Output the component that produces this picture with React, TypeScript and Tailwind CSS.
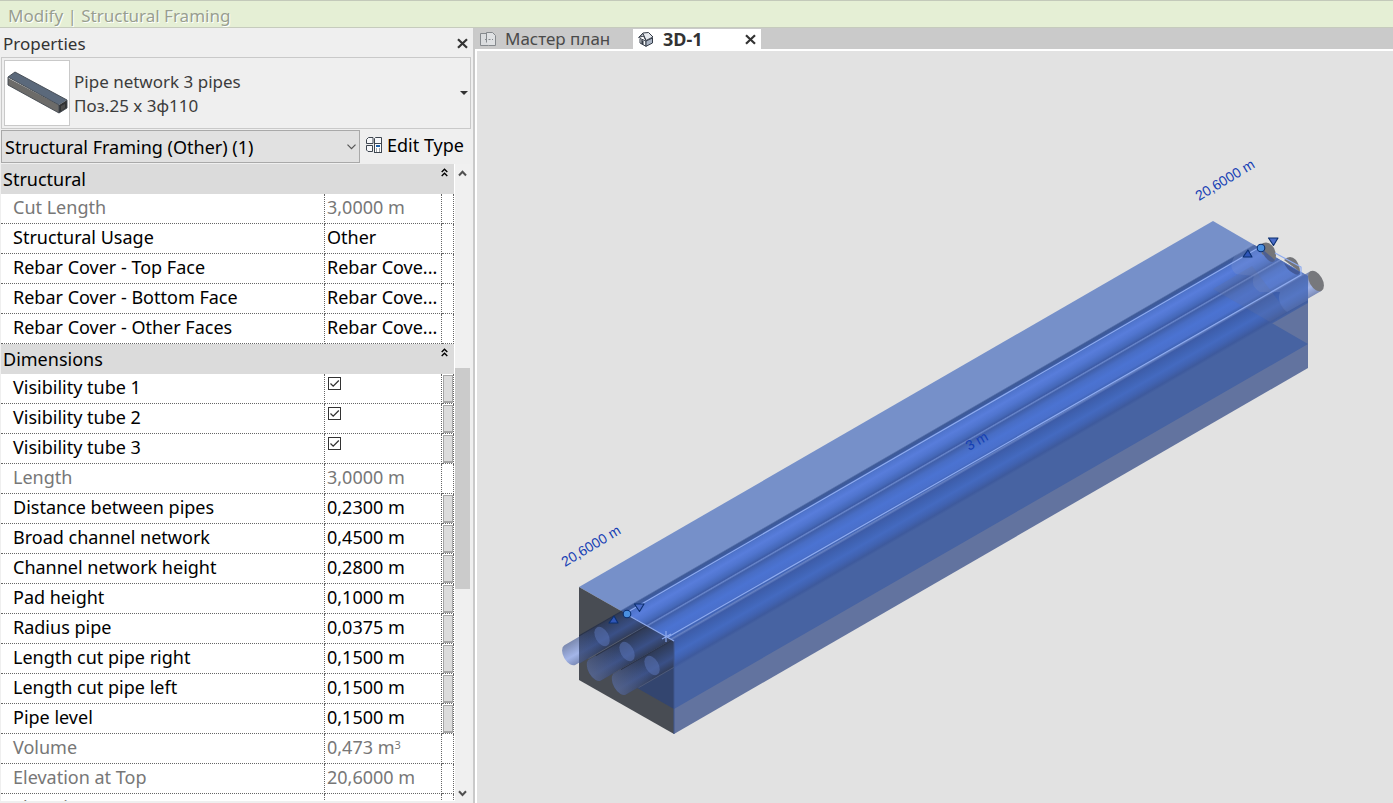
import React, { useState } from "react";

type Row = {
  name: string;
  value?: string;
  sup?: string;
  checked?: boolean;
  readOnly?: boolean;
  assoc?: boolean;
};

type Section = { title: string; rows: Row[] };

const sections: Section[] = [
  {
    title: "Structural",
    rows: [
      { name: "Cut Length", value: "3,0000 m", readOnly: true },
      { name: "Structural Usage", value: "Other" },
      { name: "Rebar Cover - Top Face", value: "Rebar Cove..." },
      { name: "Rebar Cover - Bottom Face", value: "Rebar Cove..." },
      { name: "Rebar Cover - Other Faces", value: "Rebar Cove..." },
    ],
  },
  {
    title: "Dimensions",
    rows: [
      { name: "Visibility tube 1", checked: true, assoc: true },
      { name: "Visibility tube 2", checked: true, assoc: true },
      { name: "Visibility tube 3", checked: true, assoc: true },
      { name: "Length", value: "3,0000 m", readOnly: true },
      { name: "Distance between pipes", value: "0,2300 m", assoc: true },
      { name: "Broad channel network", value: "0,4500 m", assoc: true },
      { name: "Channel network height", value: "0,2800 m", assoc: true },
      { name: "Pad height", value: "0,1000 m", assoc: true },
      { name: "Radius pipe", value: "0,0375 m", assoc: true },
      { name: "Length cut pipe right", value: "0,1500 m", assoc: true },
      { name: "Length cut pipe left", value: "0,1500 m", assoc: true },
      { name: "Pipe level", value: "0,1500 m", assoc: true },
      { name: "Volume", value: "0,473 m", sup: "3", readOnly: true },
      { name: "Elevation at Top", value: "20,6000 m", readOnly: true },
      { name: "Elevation at Bottom", readOnly: true },
    ],
  },
];

function CloseIcon() {
  return (
    <svg viewBox="0 0 11 11" className="size-[11px]" fill="none" stroke="#333" strokeWidth="2.2">
      <path d="M1 1.2 10 9.8M10 1.2 1 9.8" />
    </svg>
  );
}

function BeamThumb() {
  return (
    <svg viewBox="0 0 64 64" className="size-16">
      <path d="M3 17 54 44v8L3 24z" fill="#6c6b69" />
      <path d="M3 16 10 11 62 39 54 44z" fill="#5b697b" />
      <path d="M54 44 62 39v8l-8 5z" fill="#303234" />
      <path d="M56 45l4-2v4l-4 3z" fill="#4b4b4b" />
      <path d="M3 16v8l51 28v-8zM3 16l7-5 52 28v8l-8 5" fill="none" stroke="#3f464e" strokeWidth=".9" />
    </svg>
  );
}

function EditTypeIcon() {
  return (
    <svg viewBox="0 0 17 16" className="h-4 w-[17px]" fill="none" stroke="#3e4650" strokeWidth="1">
      <path d="M2.5.5H7v6H.5v-4zM9.5.5H15.5V6.5H8.5v-5zM.5 8.5h6v6H2L.5 13z" fill="#f7f8fa" />
      <rect x="8.5" y="6.5" width="7" height="9" fill="#fff" />
      <path d="M10 9h4" stroke="#1d5fa8" strokeWidth="2" />
      <path d="M10 12h1M13 12h1M10 14h1M13 14h1" />
    </svg>
  );
}

function PlanIcon() {
  return (
    <svg viewBox="0 0 16 15" className="h-[15px] w-4 shrink-0" fill="none" stroke="#85898d">
      <path d="M.5 1.5h8v12h-8z" fill="#dadcde" />
      <path d="M6.5 9.500V.5h6l3 3v10h-7" fill="#dfe1e3" />
      <path d="M6.5 5v6M5 7.500h8" strokeDasharray="2 1.5" />
    </svg>
  );
}

function HouseIcon() {
  return (
    <svg viewBox="0 0 16 15" className="h-[15px] w-4 shrink-0" stroke="#353c48" strokeLinejoin="round">
      <path d="M2 6.5 8 9v5.3L2 11z" fill="#f4f5f7" />
      <path d="M8 9l6.5-3v5L8 14.3z" fill="#aab4c4" />
      <path d="M.7 5.5 5 1l5.500-.5L15 5 8 8.500 5.500 4z" fill="#e6e9ee" />
      <path d="M.7 5.500 5 1.500 8 8.500" fill="none" />
      <path d="M3.500 8v3.800l1.800.9V8.800z" fill="#353c48" strokeWidth=".4" />
    </svg>
  );
}

function DoubleUp() {
  return (
    <svg viewBox="0 0 7 9" className="h-[9px] w-[7px]" fill="none" stroke="#000" strokeWidth="1.4">
      <path d="M.7 4 3.500 1.200 6.300 4M.7 8 3.500 5.200 6.300 8" />
    </svg>
  );
}

function Arrow({ down = false }: { down?: boolean }) {
  return (
    <svg viewBox="0 0 9 7" className="h-[7px] w-[9px]" fill="none" stroke="#505050" strokeWidth="2">
      <path d={down ? "M1 1.300 4.500 5 8 1.300" : "M1 5.500 4.500 1.700 8 5.500"} />
    </svg>
  );
}

function CheckCell({ label }: { label: string }) {
  const [on, setOn] = useState(true);
  return (
    <label className="mt-[3px] ml-px grid size-[13px]">
      <input
        type="checkbox"
        aria-label={label}
        checked={on}
        onChange={() => setOn(!on)}
        className="col-start-1 row-start-1 size-[13px] appearance-none border border-[#333] bg-white"
      />
      {on && (
        <svg viewBox="0 0 13 13" className="pointer-events-none col-start-1 row-start-1 size-[13px]" fill="none" stroke="#333" strokeWidth="1.300">
          <path d="M2.500 6.500 5.200 9.200 10.800 3.500" />
        </svg>
      )}
    </label>
  );
}

function PropertyTable() {
  return (
    <table className="w-full table-fixed border-separate border-spacing-0 text-left text-lg">
      <colgroup>
        <col />
        <col className="w-[117px]" />
        <col className="w-3" />
      </colgroup>
      {sections.map((s) => (
        <tbody key={s.title}>
          <tr className="h-[30px]">
            <th colSpan={3} className="bg-[#dbdbdb] p-0 font-normal">
              <div className="flex h-[30px] items-start justify-between pr-[6px] pl-[2px]">
                <span className="leading-[30px]">{s.title}</span>
                <button aria-label={`Collapse ${s.title}`} className="pt-1">
                  <DoubleUp />
                </button>
              </div>
            </th>
          </tr>
          {s.rows.map((r) => (
            <tr key={r.name} className={r.readOnly ? "h-[30px] text-[#777]" : "h-[30px] text-black"}>
              <th className="border-r border-b border-dotted border-[#666] bg-white p-0 pl-3 align-top leading-[26px] font-normal">
                {r.name}
              </th>
              <td className="border-r border-b border-dotted border-[#666] bg-white p-0 pl-[2px] align-top leading-[26px] whitespace-nowrap">
                {r.checked ? (
                  <CheckCell label={r.name} />
                ) : (
                  <>
                    {r.value}
                    {r.sup && <sup className="text-[11px] leading-none">{r.sup}</sup>}
                  </>
                )}
              </td>
              <td className="border-r border-b border-dotted border-[#666] bg-white p-0 align-top">
                {r.assoc && (
                  <button
                    aria-label={`Associate ${r.name}`}
                    className="mt-px ml-px block h-7 w-[10px] border border-b-2 border-[#a6a6a6] bg-[#dcdcdc]"
                  />
                )}
              </td>
            </tr>
          ))}
        </tbody>
      ))}
    </table>
  );
}

function Properties() {
  return (
    <aside className="flex w-[473px] shrink-0 flex-col bg-[#efefef] pr-[2px]">
      <header className="flex h-[29px] shrink-0 items-center justify-between pt-[2px] pr-[3px] pl-[3px] text-[#333]">
        <h2>Properties</h2>
        <button aria-label="Close Properties">
          <CloseIcon />
        </button>
      </header>
      <button className="ml-px flex h-[72px] shrink-0 items-center border border-[#c9c9c9] px-[2px] text-left text-[#3c3c3c]">
        <span className="border border-[#c9c9c9] bg-white">
          <BeamThumb />
        </span>
        <span className="flex grow flex-col pt-px pl-1 leading-6">
          <span>Pipe network 3 pipes</span>
          <span>Поз.25 x 3ф110</span>
        </span>
        <svg viewBox="0 0 8 4" className="h-1 w-2">
          <path d="M0 0h8L4 4z" fill="#333" />
        </svg>
      </button>
      <div className="flex shrink-0 pt-px pb-px pl-px text-lg">
        <div className="grid h-[33px] grow items-center">
          <select
            aria-label="Element filter"
            className="col-start-1 row-start-1 h-[33px] w-full appearance-none border border-[#a9a9a9] bg-[#e1e1e1] pl-[3px] text-black"
          >
            <option>Structural Framing (Other) (1)</option>
          </select>
          <svg viewBox="0 0 9 6" className="pointer-events-none col-start-1 row-start-1 mr-1 h-[6px] w-[9px] justify-self-end" fill="none" stroke="#555" strokeWidth="1.200">
            <path d="M.5.700 4.500 4.700 8.500.700" />
          </svg>
        </div>
        <button className="flex h-[30px] w-[111px] items-center gap-1 pl-[6px] whitespace-nowrap text-black">
          <EditTypeIcon />
          Edit Type
        </button>
      </div>
      <div className="flex min-h-0 grow pb-[2px] pl-px">
        <div className="w-0 grow overflow-hidden text-black">
          <PropertyTable />
        </div>
        <div className="flex w-[17px] shrink-0 flex-col items-start border-l border-white bg-[#f0f0f0] pt-[6px] pb-1">
          <div className="pl-[3px]">
            <Arrow />
          </div>
          <div className="flex grow flex-col">
            <div className="grow-[191]" />
            <div className="w-[15px] grow-[222] bg-[#cbcbcb]" />
            <div className="grow-[201]" />
          </div>
          <div className="pl-[3px]">
            <Arrow down />
          </div>
        </div>
      </div>
    </aside>
  );
}

const outline = { stroke: "#0b2f70", strokeWidth: 1.1 };

function Model() {
  return (
    <svg viewBox="477 51 916 752" preserveAspectRatio="xMidYMid slice" className="block h-full w-full" role="img" aria-label="Pipe network model">
      <defs>
        <linearGradient id="band" gradientUnits="userSpaceOnUse" x1="880" y1="460" x2="919" y2="527.5">
          <stop offset="0" stopColor="#7690c9" />
          <stop offset=".02" stopColor="#3f5b98" />
          <stop offset=".05" stopColor="#3c5a9e" />
          <stop offset=".09" stopColor="#4f74cc" />
          <stop offset=".16" stopColor="#587ddb" />
          <stop offset=".23" stopColor="#5075cf" />
          <stop offset=".3" stopColor="#4568b8" />
          <stop offset=".33" stopColor="#3d5ba6" />
          <stop offset=".345" stopColor="#6a87cc" />
          <stop offset=".365" stopColor="#405fa9" />
          <stop offset=".43" stopColor="#486dc4" />
          <stop offset=".51" stopColor="#4b73d2" />
          <stop offset=".59" stopColor="#4a70cc" />
          <stop offset=".63" stopColor="#4063b4" />
          <stop offset=".65" stopColor="#6681c2" />
          <stop offset=".675" stopColor="#3d5ca8" />
          <stop offset=".76" stopColor="#4064b5" />
          <stop offset=".83" stopColor="#446ac0" />
          <stop offset=".9" stopColor="#4163b2" />
          <stop offset=".965" stopColor="#3e5a9d" />
          <stop offset="1" stopColor="#4763a2" />
        </linearGradient>
        <linearGradient id="tube" gradientUnits="userSpaceOnUse" x1="0" y1="-12" x2="0" y2="12">
          <stop offset="0" stopColor="#2f3a55" />
          <stop offset=".3" stopColor="#33446c" />
          <stop offset=".65" stopColor="#3a5087" />
          <stop offset="1" stopColor="#323e5c" />
        </linearGradient>
        <linearGradient id="tubeOut" gradientUnits="userSpaceOnUse" x1="0" y1="-11.200" x2="0" y2="11.200">
          <stop offset="0" stopColor="#7c8ab0" />
          <stop offset=".6" stopColor="#a3b5e8" />
          <stop offset="1" stopColor="#7c8cb8" />
        </linearGradient>
        <linearGradient id="fade" gradientUnits="userSpaceOnUse" x1="-6" y1="0" x2="34" y2="0">
          <stop offset="0" stopColor="#5a678a" stopOpacity=".8" />
          <stop offset="1" stopColor="#4a5b8a" stopOpacity="0" />
        </linearGradient>
        <clipPath id="body">
          <path d="M579 587 1213 221 1308 276V368L674 734V641z" />
        </clipPath>
        <clipPath id="front">
          <path d="M579 587 674 641V734L579 680z" />
        </clipPath>
        <clipPath id="outsideLeft">
          <path d="M540 600H579V700H540z" />
        </clipPath>
      </defs>

      <g transform="translate(1316 281) rotate(-30)">
        <path d="M-40-11.200H0V11.200H-40z" fill="url(#tubeOut)" />
      </g>

      <path d="M579 587 1213 221 1308 276 674 641z" fill="#7690c9" />
      <path d="M674 641 1308 276V368L674 734z" fill="#62739f" />
      <path d="M674 641 1240 315V304.500L1308 344 674 709z" fill="#4763a2" />
      <g clipPath="url(#body)">
        <path d="M610 615.900 1330 200.200V290.200L610 705.900z" fill="url(#band)" />
        <path d="M1234 257Q1228 268 1236 274L1254 276Q1250 286 1260 292L1280 292Q1276 303 1287 312L1330 288V250L1260 235z" fill="#8298cc" opacity=".28" />
        <path d="M1213 289 1252 266 1287 312 1270 322z" fill="#62739f" opacity=".25" />
      </g>

      <path d="M579 587 674 641V734L579 680z" fill="#484c53" />
      <g clipPath="url(#front)">
        <path d="M674 709 630 684 674 655z" fill="#33456f" />
        <path d="M626 613 674 641V665L640 670z" fill="#31405f" />
        {[
          [570, 655],
          [595, 670],
          [620, 684],
        ].map(([x, y]) => (
          <g key={x} transform={`translate(${x} ${y}) rotate(-30)`}>
            <path d="M0-12H150V12H0A6.500 12 0 0 1 0-12z" fill="url(#tube)" />
            <path d="M0-12H36V12H0A6.500 12 0 0 1 0-12z" fill="url(#fade)" />
            <path d="M8-12H150" stroke="#2a334a" />
            <path d="M14 12.500H150" stroke="#56617c" strokeWidth=".7" />
            <ellipse cx="37" rx="6.500" ry="10.500" fill="#5a73b4" opacity=".55" />
          </g>
        ))}
      </g>
      <g clipPath="url(#outsideLeft)">
        <g transform="translate(570 655) rotate(-30)">
          <path d="M0-11.200H30V11.200H0A6.500 11.200 0 0 1 0-11.200z" fill="url(#tubeOut)" />
        </g>
      </g>
      <path d="M674 641V734" stroke="#3f568e" strokeWidth="1" />

      <g transform="translate(1316 281) rotate(-30)">
        <ellipse rx="6.500" ry="11.200" fill="#77787c" />
      </g>
      <path d="M1260 245Q1268 239 1274 248 1278 257 1274 261L1262 254z" fill="#747579" />
      <path d="M1262 249 1275 260Q1273 264 1268 260 1263 256 1262 249z" fill="#4c5f92" />
      <path d="M1284 260Q1290 254 1296 260 1300 266 1300 272z" fill="#747579" />
      <path d="M1284 263 1300 272Q1299 277 1293 273 1287 270 1284 263z" fill="#435a98" />

      <g fill="none" stroke="#8eabf0" strokeWidth="1.200">
        <path d="M626 613 1260 247" />
        <path d="M668 637 1301 275V267L1275 253" />
        <path d="M626 614 674 641" />
        <path d="M666 631V642M662 639 671 634" />
      </g>

      {[
        [627, 614],
        [1261, 248],
      ].map(([x, y]) => (
        <g key={x} transform={`translate(${x} ${y})`} strokeLinejoin="round">
          <circle r="3.800" fill="#4a90e0" {...outline} />
          <path d="M7.500-10H17L12.500-2.500z" fill="#4a6cc8" {...outline} />
          <path d="M-18 9H-9L-13 2z" fill="#2f56b8" {...outline} />
        </g>
      ))}

      <g className="font-['Liberation_Sans',sans-serif] text-[14px]" fill="#1540b4">
        <text transform="translate(565 567) rotate(-31)">20,6000 m</text>
        <text transform="translate(1199 201) rotate(-31)">20,6000 m</text>
        <text transform="translate(969 451) rotate(-30)">3 m</text>
      </g>
    </svg>
  );
}

export default function App() {
  return (
    <div className="flex h-screen flex-col overflow-hidden bg-[#cacaca] font-['Noto_Sans',sans-serif] text-[17px]">
      <header className="flex h-7 shrink-0 items-center border-t border-b border-t-[#c3c9ba] border-b-[#c6cbbd] bg-[#e5efd5] pt-[3px] pl-2">
        <h1 className="text-[#989e90] [text-shadow:1px_1px_0_#fff]">Modify | Structural Framing</h1>
      </header>
      <div className="flex min-h-0 grow">
        <Properties />
        <main className="flex min-w-0 grow flex-col border-l-2 border-[#c9c9c9]">
          <nav className="flex h-[21px] shrink-0 items-end bg-[#cacaca] pl-[5px]">
            <button className="flex h-5 w-[153px] items-center gap-[9px] leading-5 text-[#4a4a4a]">
              <PlanIcon />
              Мастер план
            </button>
            <div className="flex h-5 w-32 items-center bg-white pr-[5px] pl-[5px] text-[#333]">
              <button className="flex grow items-center gap-[9px] text-lg leading-5 font-bold">
                <HouseIcon />
                3D-1
              </button>
              <button aria-label="Close 3D-1">
                <CloseIcon />
              </button>
            </div>
          </nav>
          <div className="min-h-0 grow border-t-2 border-l-2 border-white bg-[#e2e2e2]">
            <Model />
          </div>
        </main>
      </div>
    </div>
  );
}
